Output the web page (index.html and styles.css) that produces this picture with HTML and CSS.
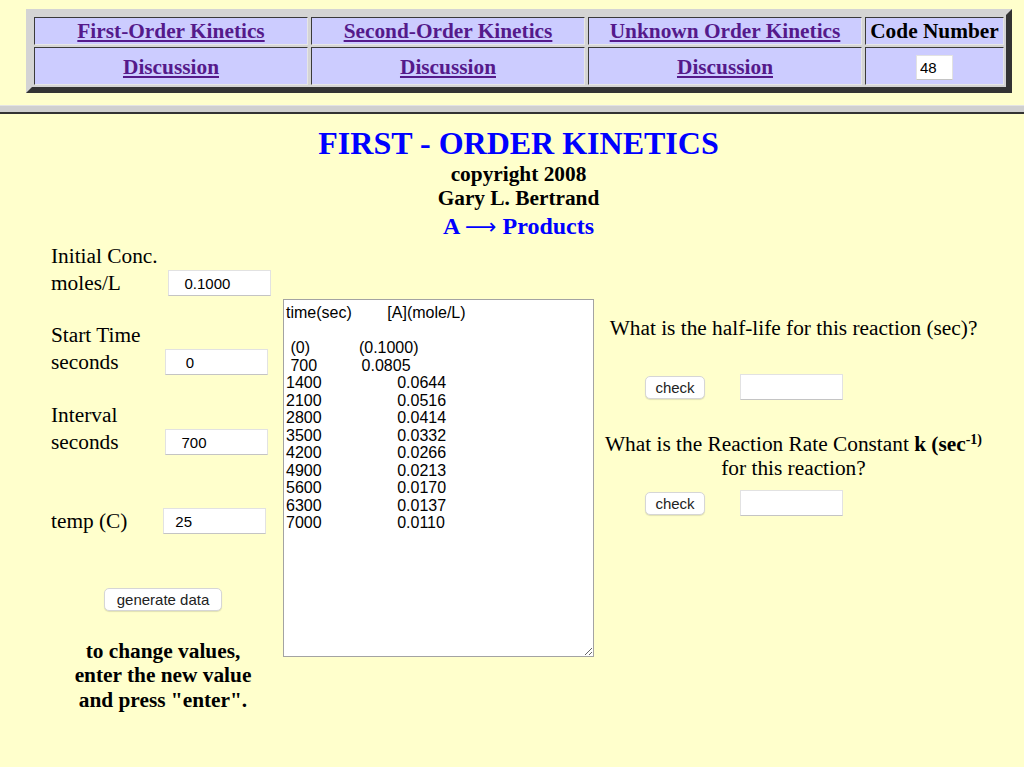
FILE: index.html
```html
<!DOCTYPE html>
<html lang="en">
<head>
<meta charset="utf-8">
<title>First-Order Kinetics</title>
<link rel="stylesheet" href="styles.css">
</head>
<body>
<nav class="nav">
  <div class="cell"><a href="#first">First-Order Kinetics</a></div>
  <div class="cell"><a href="#second">Second-Order Kinetics</a></div>
  <div class="cell"><a href="#unknown">Unknown Order Kinetics</a></div>
  <div class="cell cell-label">Code Number</div>
  <div class="cell cell-low"><a href="#d1">Discussion</a></div>
  <div class="cell cell-low"><a href="#d2">Discussion</a></div>
  <div class="cell cell-low"><a href="#d3">Discussion</a></div>
  <div class="cell cell-low"><input class="code-input" type="text" value="48"></div>
</nav>
<div class="rule"></div>
<header class="head">
  <h1 class="title">FIRST - ORDER KINETICS</h1>
  <p class="sub">copyright 2008</p>
  <p class="sub">Gary L. Bertrand</p>
  <p class="rxn">A <span class="arrow">⟶</span> Products</p>
</header>
<main class="main">
  <section class="left">
    <div class="row">
      <div class="label">Initial Conc.<br>moles/L</div>
      <input class="field shift-r" type="text" value="   0.1000">
    </div>
    <div class="row gap-a">
      <div class="label">Start Time<br>seconds</div>
      <input class="field" type="text" value="    0">
    </div>
    <div class="row gap-b">
      <div class="label">Interval<br>seconds</div>
      <input class="field" type="text" value="   700">
    </div>
    <div class="row gap-c">
      <div class="label">temp (C)</div>
      <input class="field shift-l" type="text" value="  25">
    </div>
    <div class="gen"><button class="btn btn-gen" type="button">generate data</button></div>
    <p class="hint">to change values,<br>enter the new value<br>and press "enter".</p>
  </section>
  <textarea class="data" spellcheck="false">time(sec)        [A](mole/L)

 (0)           (0.1000)
 700          0.0805
1400                 0.0644
2100                 0.0516
2800                 0.0414
3500                 0.0332
4200                 0.0266
4900                 0.0213
5600                 0.0170
6300                 0.0137
7000                 0.0110</textarea>
  <section class="right">
    <p class="q">What is the half-life for this reaction (sec)?</p>
    <div class="check-row row-1">
      <button class="btn btn-check" type="button">check</button>
      <input class="field" type="text" value="">
    </div>
    <p class="q q-2">What is the Reaction Rate Constant <b>k (sec<sup class="exp">-1)</sup></b><br>for this reaction?</p>
    <div class="check-row row-2">
      <button class="btn btn-check" type="button">check</button>
      <input class="field" type="text" value="">
    </div>
  </section>
</main>
</body>
</html>
```
FILE: styles.css
```css
html, body {
  margin: 0;
  padding: 0;
}
body {
  background: #ffffcc;
  font-family: "Liberation Serif", "Times New Roman", serif;
  font-size: 21.33px;
  color: #000;
  width: 1024px;
  height: 767px;
  overflow: hidden;
}

/* navigation table */
.nav {
  display: grid;
  grid-template-columns: 274px 274px 274px 139px;
  grid-template-rows: 28px 38px;
  column-gap: 3px;
  row-gap: 2px;
  padding: 2px;
  width: 986px;
  box-sizing: border-box;
  margin: 9px 0 0 26px;
  border: 6px solid;
  border-color: #d4d4d4 #333 #333 #d4d4d4;
  background: #d4d4d4;
}
.cell {
  background: #ccccff;
  border: 1px solid;
  border-color: #3a3a3a #e6e6e6 #e6e6e6 #3a3a3a;
  display: flex;
  align-items: center;
  justify-content: center;
  font-weight: bold;
  white-space: nowrap;
}
.cell-low {
  padding-top: 3px;
}
.cell a {
  color: #551a8b;
  text-decoration: underline;
}
.code-input {
  width: 37px;
  height: 25px;
  box-sizing: border-box;
  border: 1px solid #e2e2e2;
  border-bottom-color: #c4c4c4;
  background: #fff;
  font-family: "Liberation Sans", Arial, sans-serif;
  font-size: 15px;
  padding: 0 3px;
  color: #000;
}

.rule {
  height: 6px;
  background: #d0d0d0;
  border-top: 1px solid #e4e4e4;
  border-bottom: 2px solid #333;
  margin-top: 12px;
}

/* heading */
.head {
  text-align: center;
  padding-left: 13px;
  margin-top: 10.5px;
}
.title {
  margin: 0;
  font-size: 32px;
  line-height: 37px;
  color: #0000ff;
  font-weight: bold;
}
.sub {
  margin: 0;
  font-weight: bold;
  line-height: 24.5px;
}
.rxn {
  margin: 0;
  color: #0000ff;
  font-weight: bold;
  font-size: 24px;
  line-height: 31px;
}
.arrow {
  font-family: "DejaVu Sans", sans-serif;
  font-weight: normal;
  font-size: 22px;
}

/* main area */
.main {
  display: flex;
  align-items: flex-start;
  padding-left: 51px;
}
.left {
  width: 224px;
  padding-top: 1px;
  display: flex;
  flex-direction: column;
}
.row {
  display: flex;
  align-items: flex-end;
}
.label {
  width: 114px;
  line-height: 27px;
  white-space: nowrap;
}
.gap-a { margin-top: 25px; }
.gap-b { margin-top: 26px; }
.gap-c { margin-top: 52px; }
.shift-r { margin-left: 3px; }
.shift-l { margin-left: -2px; }
.row .field { margin-bottom: 0.5px; }

.field {
  width: 103px;
  height: 26px;
  box-sizing: border-box;
  border: 1px solid #e2e2e2;
  border-bottom-color: #c4c4c4;
  background: #fff;
  font-family: "Liberation Sans", Arial, sans-serif;
  font-size: 15px;
  padding: 0 3px;
  color: #000;
  white-space: pre;
}

.btn {
  height: 23px;
  box-sizing: border-box;
  border: 1px solid #d6d6d6;
  border-radius: 5px;
  background: #fff;
  font-family: "Liberation Sans", Arial, sans-serif;
  font-size: 15px;
  color: #222;
  padding: 0 8px;
  box-shadow: 0 1px 1px rgba(0, 0, 0, 0.12);
}
.btn-check {
  width: 60px;
  padding: 0;
}
.btn-gen {
  width: 118px;
  padding: 0;
}
.gen {
  display: flex;
  justify-content: center;
  margin-top: 53.5px;
}
.hint {
  margin: 27.5px 0 0;
  font-weight: bold;
  text-align: center;
  line-height: 24.5px;
}

.data {
  margin: 57.5px 0 0 8px;
  width: 311px;
  height: 358px;
  box-sizing: border-box;
  border: 1px solid #a3a3a3;
  background: #fff;
  font-family: "Liberation Sans", Arial, sans-serif;
  font-size: 16px;
  line-height: 17.5px;
  padding: 4px 2px;
  color: #000;
  white-space: pre;
  overflow: hidden;
}

.right {
  width: 393px;
  margin-left: 3px;
  padding-top: 74px;
}
.q {
  margin: 0;
  text-align: center;
  line-height: 24.5px;
  white-space: nowrap;
}
.q-2 { margin-top: 31.75px; }
.exp {
  font-size: 14px;
  line-height: 0;
  vertical-align: 7px;
}
.check-row {
  display: flex;
  align-items: center;
  gap: 35px;
  padding-left: 48px;
}
.row-1 { margin-top: 34px; }
.row-2 { margin-top: 9.25px; }
```
